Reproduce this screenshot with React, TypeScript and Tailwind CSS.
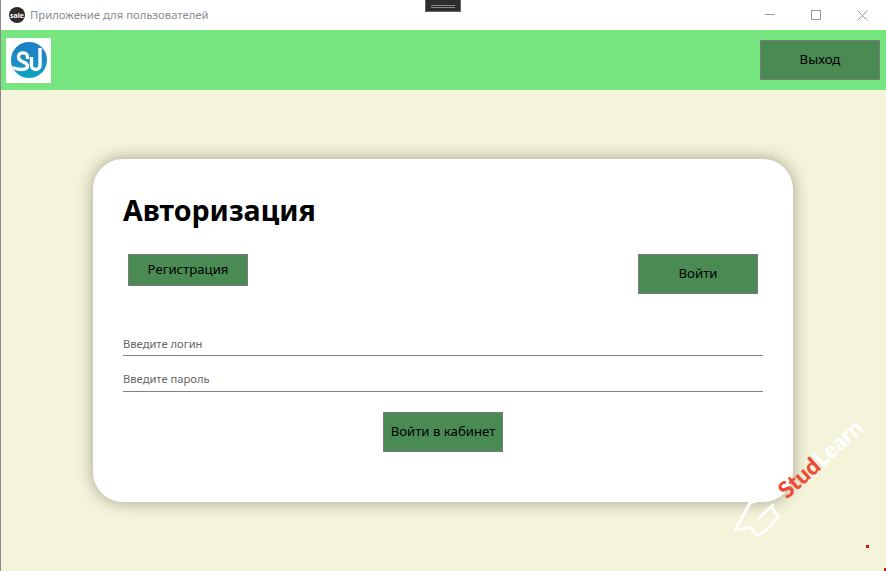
import React from "react";

const font = { fontFamily: '"Lato", "Noto Sans", sans-serif' };

const greenBtn =
  "flex items-center justify-center w-[120px] bg-[#4a8a53] border border-[#7a7a7a] text-black text-[13.2px] shrink-0";

const App: React.FC = () => {
  return (
    <div className="relative w-[886px] h-[571px] overflow-hidden flex flex-col bg-[#f4f4da] border-l border-[#8a8a8a] font-['Noto_Sans']">
      {/* title bar */}
      <div className="h-[30px] bg-white flex items-center shrink-0 relative">
        <div className="ml-[8px] w-[16px] h-[16px] rounded-full bg-[#2b2b2b] flex items-center justify-center text-white text-[7px] font-bold leading-none">
          sale
        </div>
        <span className="ml-[5px] text-[11.3px] text-[#8c8c94]">Приложение для пользователей</span>
        <div className="ml-auto mr-px flex items-center">
          <div className="w-[46px] h-[30px] flex items-center justify-center">
            <svg width="10" height="10" viewBox="0 0 10 10">
              <path d="M0 4.5H10" stroke="#999" fill="none" />
            </svg>
          </div>
          <div className="w-[46px] h-[30px] flex items-center justify-center">
            <svg width="10" height="10" viewBox="0 0 10 10">
              <rect x="0.5" y="0.5" width="9" height="9" stroke="#999" fill="none" />
            </svg>
          </div>
          <div className="w-[46px] h-[30px] flex items-center justify-center">
            <svg width="11" height="11" viewBox="0 0 11 11">
              <path d="M0.5 0.5L10.5 10.5M10.5 0.5L0.5 10.5" stroke="#999" fill="none" />
            </svg>
          </div>
        </div>
        {/* little tab on top */}
        <div className="absolute left-[424px] top-0 w-[36px] h-[12px] bg-[#2d2d2d] border border-t-0 border-[#666] flex flex-col items-center justify-end gap-[1px] pb-[3px]">
          <div className="w-[24px] h-px bg-[#888]" />
          <div className="w-[24px] h-px bg-[#888]" />
        </div>
      </div>

      {/* header */}
      <div className="h-[60px] bg-[#77e681] flex items-center justify-between pl-[5px] pr-[6px] shrink-0">
        <div className="w-[45px] h-[45px] bg-white flex items-center justify-center">
          <svg width="36" height="36" viewBox="0 0 36 36">
            <defs>
              <linearGradient id="su" x1="0" y1="0" x2="0" y2="1">
                <stop offset="0" stopColor="#1b7fc4" />
                <stop offset="0.55" stopColor="#1b8cc4" />
                <stop offset="1" stopColor="#0aa7bd" />
              </linearGradient>
              <clipPath id="suClip">
                <circle cx="18" cy="18" r="18" />
              </clipPath>
            </defs>
            <circle cx="18" cy="18" r="18" fill="url(#su)" />
            <path
              d="M16.5 17 V15 C16.5 9.5 7.5 9.5 7.5 15 C7.5 21 16.5 19 16.5 24 C16.5 28 9 28.5 1 25.5 M20.5 15 V23 C20.5 29 29 29 29 23 V6"
              stroke="#fff"
              strokeWidth="3.4"
              fill="none"
              clipPath="url(#suClip)"
            />
          </svg>
        </div>
        <button className={`${greenBtn} h-[40px] pb-[1px]`}>Выход</button>
      </div>

      {/* page */}
      <div className="flex-1 pl-[92px] pt-[69px]">
        <div className="w-[700px] h-[343px] bg-white rounded-[30px] shadow-[0_0_16px_rgba(60,60,50,0.45)] pl-[30px] pr-[30px] pt-[30px] flex flex-col">
          <h1 className="text-[28.6px] leading-[42px] font-bold text-black">Авторизация</h1>
          <div className="flex justify-between items-start mt-[23px] pl-[5px] pr-[5px]">
            <button className={`${greenBtn} h-[32px] pb-[1px]`}>Регистрация</button>
            <button className={`${greenBtn} h-[40px] pb-[1px]`}>Войти</button>
          </div>
          <div className="mt-[41px] h-[21px] border-b border-[#808080] text-[11.2px] leading-[17px] text-[#666]">
            Введите логин
          </div>
          <div className="mt-[15px] h-[21px] border-b border-[#808080] text-[11.2px] leading-[16px] text-[#666]">
            Введите пароль
          </div>
          <div className="flex justify-center mt-[20px]">
            <button className={`${greenBtn} h-[40px] pb-[1px]`}>Войти в кабинет</button>
          </div>
        </div>
      </div>

      {/* watermark */}
      <div
        className="absolute left-[767px] top-[447px] -rotate-[42deg] text-[23px] font-black leading-none whitespace-nowrap"
        style={font}
      >
        <span className="text-[#ef4a35]">Stud</span>
        <span className="text-white">Learn</span>
      </div>
      <svg className="absolute left-[732px] top-[492px]" width="50" height="46" viewBox="0 0 50 46">
        <path
          d="M2 38 L17 11 C26 8 36 6 47 3 M2 38 L17 35 L24 43 C30 42 40 32 45 25 L40 17 M26 26 L40 13"
          stroke="#fff"
          strokeWidth="3"
          fill="none"
          strokeLinecap="round"
          strokeLinejoin="round"
        />
      </svg>

      {/* stray red pixels */}
      <div className="absolute left-[865px] top-[545px] w-[3px] h-[3px] bg-[#e01010]" />
      <div className="absolute left-[883px] top-[568px] w-[3px] h-[3px] bg-[#e01010]" />
    </div>
  );
};

export default App;
